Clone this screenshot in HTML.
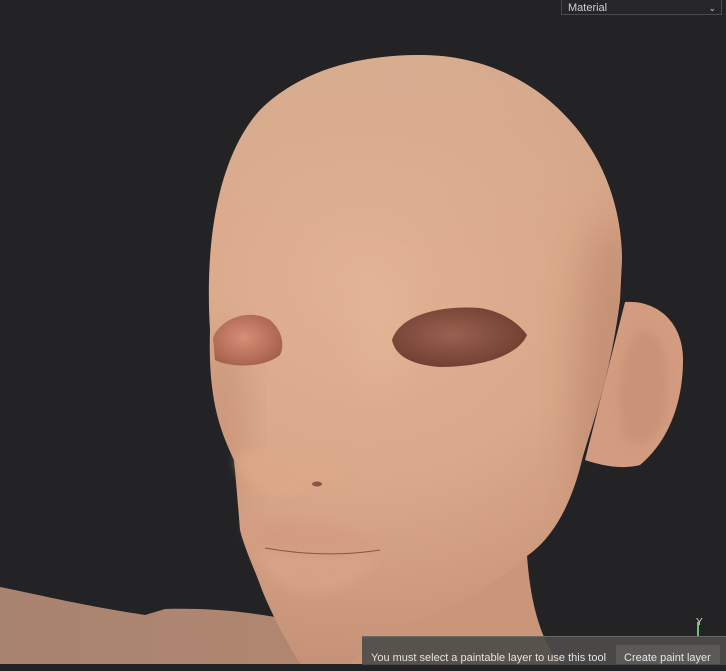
<!DOCTYPE html>
<html><head><style>
html,body{margin:0;padding:0;width:726px;height:664px;overflow:hidden;background:#232325;font-family:"Liberation Sans",sans-serif}
.dd{position:absolute;left:561px;top:-1px;width:161px;height:16px;border:1px solid #4a4a4c;background:#262628;color:#cfcfcf;font-size:11px;line-height:16px;padding-left:6px;box-sizing:border-box}
.bar{position:absolute;left:362px;top:636px;width:364px;height:28px;background:rgba(78,76,74,0.92);border-top:1px solid #6a6a6a}
.msg{position:absolute;left:371px;top:652px;color:#e2e2e2;font-size:11px}
.btn{position:absolute;left:616px;top:645px;width:104px;height:19px;background:#5a5957;color:#e6e6e6;font-size:11px;line-height:26px;padding-left:8px;box-sizing:border-box}
</style></head><body>
<svg width="726" height="664" style="position:absolute;left:0;top:0">
<defs>
<filter id="bl" x="-50%" y="-50%" width="200%" height="200%"><feGaussianBlur stdDeviation="18"/></filter>
<filter id="bs" x="-50%" y="-50%" width="200%" height="200%"><feGaussianBlur stdDeviation="5"/></filter>
<radialGradient id="sk" cx="0.5" cy="0.42" r="0.7">
<stop offset="0" stop-color="#e2b294"/>
<stop offset="0.45" stop-color="#d9a789"/>
<stop offset="0.8" stop-color="#c89479"/>
<stop offset="1" stop-color="#b98468"/>
</radialGradient>
<linearGradient id="top" x1="0" y1="0" x2="0" y2="1">
<stop offset="0" stop-color="#d8b094" stop-opacity="0.7"/>
<stop offset="1" stop-color="#d8b094" stop-opacity="0"/>
</linearGradient>
<linearGradient id="sh" x1="0" y1="0" x2="1" y2="0">
<stop offset="0" stop-color="#a98470"/>
<stop offset="1" stop-color="#b08670"/>
</linearGradient>
<radialGradient id="e1" cx="0.45" cy="0.45" r="0.6">
<stop offset="0" stop-color="#d98f78"/><stop offset="1" stop-color="#a5604c"/>
</radialGradient>
<radialGradient id="e2" cx="0.45" cy="0.45" r="0.6">
<stop offset="0" stop-color="#9a6050"/><stop offset="1" stop-color="#6e3e30"/>
</radialGradient>
<clipPath id="hc"><path d="M420,55 C540,55 622,150 622,260 L620,300 C610,380 590,430 582,460 C570,510 550,540 527,556 C500,580 470,600 430,615 C400,628 370,640 350,664 L300,664 C285,640 270,610 262,590 C255,570 245,550 240,530 C238,505 236,480 234,460 C220,430 208,400 210,330 C205,250 215,160 260,110 C300,70 360,55 420,55 Z"/></clipPath>
</defs>
<path d="M0,587 C40,595 80,605 145,615 L165,609 C200,608 235,610 275,617 L300,664 L0,664 Z" fill="url(#sh)"/>
<path d="M527,555 C530,600 540,640 560,664 L300,664 Z" fill="#c99679"/>
<path d="M625,302 C655,300 683,320 683,360 C683,400 670,440 640,465 C620,470 600,465 585,460 Z" fill="#d39c80"/>
<g clip-path="url(#hc)">
<rect x="0" y="0" width="726" height="664" fill="url(#sk)"/>
<ellipse cx="420" cy="140" rx="220" ry="110" fill="url(#top)"/>
<ellipse cx="610" cy="380" rx="35" ry="160" fill="#b07a60" opacity="0.45" filter="url(#bl)"/>
<ellipse cx="222" cy="420" rx="22" ry="90" fill="#b58066" opacity="0.45" filter="url(#bl)"/>
<ellipse cx="380" cy="330" rx="20" ry="60" fill="#e6b99c" opacity="0.5" filter="url(#bl)"/>
</g>
<path d="M640,330 C665,330 672,370 665,410 C660,440 640,450 625,440 C615,400 620,350 640,330 Z" fill="#c08770" opacity="0.5" filter="url(#bs)"/>
<path d="M213,338 C220,318 250,308 270,320 C282,330 285,345 280,355 C265,368 230,368 215,360 Z" fill="url(#e1)"/>
<path d="M392,340 C400,315 440,305 480,308 C505,312 520,325 527,335 C520,352 490,367 440,367 C410,365 395,355 392,340 Z" fill="url(#e2)"/>
<path d="M236,460 C245,445 270,450 300,455 C320,458 340,458 345,470 C340,490 325,492 310,485 C300,490 290,500 275,495 C255,488 238,475 236,460 Z" fill="#dca88a" opacity="0.8" filter="url(#bs)"/>
<ellipse cx="317" cy="484" rx="5" ry="2.5" fill="#8a5444"/>
<path d="M245,528 C270,515 330,515 385,548 C360,555 300,558 255,545 Z" fill="#d49c82" opacity="0.8" filter="url(#bs)"/>
<path d="M255,548 C300,560 350,560 380,552 C370,580 330,598 295,590 C270,580 260,565 255,548 Z" fill="#d8a488" opacity="0.8" filter="url(#bs)"/>
<path d="M265,548 C310,556 350,555 380,550" stroke="#8a5444" stroke-width="1" fill="none"/>
<rect x="697" y="622" width="2" height="14" fill="#6cc46c"/>
<text x="696" y="625" fill="#dcdcdc" font-size="10" font-family="Liberation Sans">Y</text>
</svg>
<div class="dd">Material<span style="position:absolute;right:5px;top:0;font-size:9px">&#8964;</span></div>
<div class="bar"></div>
<div class="msg">You must select a paintable layer to use this tool</div>
<div class="btn">Create paint layer</div>
</body></html>
